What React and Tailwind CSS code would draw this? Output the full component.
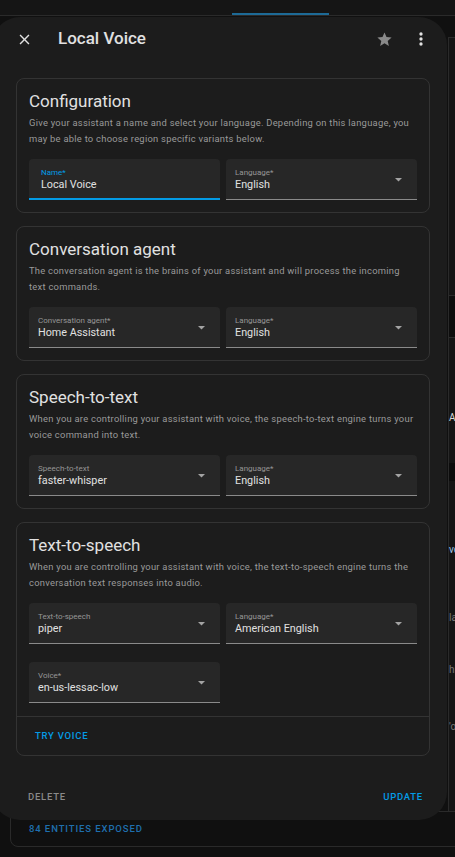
import React from 'react';

function Field({ label, value, focused, select }) {
  return (
    <div
      className={`relative h-[41px] rounded-t-[4px] bg-[#272727] pt-[9px] ${select ? 'pl-[9px]' : 'pl-[12px]'} ${
        focused ? 'border-b-2 border-[#039be5]' : 'border-b border-[#8a8a8a]'
      }`}
    >
      <div className={`text-[8px] leading-[10px] ${focused ? 'text-[#039be5]' : 'text-[#969696]'}`}>{label}</div>
      <div className="text-[10.8px] leading-[14px] text-[#e1e1e1]">{value}</div>
      {select && (
        <svg className="absolute right-[15px] top-[19px]" width="7" height="4" viewBox="0 0 7 4">
          <path d="M0 0h7L3.5 3.5z" fill="#a3a3a3" />
        </svg>
      )}
    </div>
  );
}

function Section({ title, text, children }) {
  return (
    <section className="rounded-[8px] border border-[#333333] px-[12px] pt-[12px] pb-[12px]">
      <h2 className="text-[17px] leading-[20px] text-[#e1e1e1]">{title}</h2>
      <p className="mt-[4px] text-[9.4px] leading-[15.5px] tracking-[0.26px] text-[#9a9a9a]">{text}</p>
      {children}
    </section>
  );
}

export default function App() {
  return (
    <div className="relative flex h-[857px] w-[455px] flex-col overflow-hidden bg-[#101010] font-[Roboto,sans-serif]">
      {/* page behind the dialog */}
      <div className="flex h-[16px] border-b border-[#2a2a2a] bg-[#151515]">
        <div className="ml-[232px] mt-auto h-[2px] w-[97px] bg-[#1d6a96]"></div>
      </div>
      <div className="flex flex-1">
        <div className="w-[448px] shrink-0"></div>
        <div className="mt-[21px] flex-1 border-l border-t border-[#2a2a2a] bg-[#151515] text-[10px] leading-[12px]">
          <div className="h-[258px] border-b border-[#2a2a2a]"></div>
          <div className="h-[42px] border-b border-[#2a2a2a] bg-[#0d0d0d]"></div>
          <div className="h-[74px]"></div>
          <div className="text-[#d8d8d8]">Assist</div>
          <div className="h-[39px]"></div>
          <div className="h-[18px] bg-[#0c0c0c]"></div>
          <div className="h-[63px]"></div>
          <div className="text-[#9fc6e4]">voice</div>
          <div className="h-[56px]"></div>
          <div className="text-[#777]">language</div>
          <div className="h-[40px]"></div>
          <div className="text-[#777]">hi</div>
          <div className="h-[45px]"></div>
          <div className="text-[#777]">'o</div>
        </div>
      </div>
      <div className="mb-[10px] ml-[10px] -mr-[10px] flex h-[36px] items-center rounded-[8px] border border-[#2a2a2a] pl-[18px]">
        <span className="text-[9.5px] font-medium tracking-[0.9px] text-[#1f6fae]">84 ENTITIES EXPOSED</span>
      </div>

      {/* dialog */}
      <div className="absolute left-[-8px] top-[17px] flex h-[803px] w-[455px] flex-col rounded-[28px] bg-[#1c1c1c]">
        <div className="flex h-[44px] items-center pl-[24px] pr-[16px]">
          <svg width="17" height="17" viewBox="0 0 24 24">
            <path
              fill="#e1e1e1"
              d="M19,6.41L17.59,5L12,10.59L6.41,5L5,6.41L10.59,12L5,17.59L6.41,19L12,13.41L17.59,19L19,17.59L13.41,12L19,6.41Z"
            />
          </svg>
          <h1 className="ml-[25px] flex-1 text-[17px] font-medium text-[#e1e1e1]">Local Voice</h1>
          <svg width="17" height="17" viewBox="0 0 24 24">
            <path fill="#8a8a8a" d="M12 17.27L18.18 21l-1.64-7.03L22 9.24l-7.19-.61L12 2 9.19 8.63 2 9.24l5.46 4.73L5.82 21z" />
          </svg>
          <svg className="ml-[18px]" width="20" height="20" viewBox="0 0 24 24">
            <path
              fill="#e1e1e1"
              d="M12,16A2,2 0 0,1 14,18A2,2 0 0,1 12,20A2,2 0 0,1 10,18A2,2 0 0,1 12,16M12,10A2,2 0 0,1 14,12A2,2 0 0,1 12,14A2,2 0 0,1 10,12A2,2 0 0,1 12,10M12,4A2,2 0 0,1 14,6A2,2 0 0,1 12,8A2,2 0 0,1 10,6A2,2 0 0,1 12,4Z"
            />
          </svg>
        </div>

        <div className="flex flex-col gap-[13px] pl-[24px] pr-[17px] pt-[17px]">
          <Section
            title="Configuration"
            text="Give your assistant a name and select your language. Depending on this language, you may be able to choose region specific variants below."
          >
            <div className="mt-[13px] grid grid-cols-2 gap-[6px]">
              <Field label="Name*" value="Local Voice" focused />
              <Field label="Language*" value="English" select />
            </div>
          </Section>

          <Section
            title="Conversation agent"
            text="The conversation agent is the brains of your assistant and will process the incoming text commands."
          >
            <div className="mt-[13px] grid grid-cols-2 gap-[6px]">
              <Field label="Conversation agent*" value="Home Assistant" select />
              <Field label="Language*" value="English" select />
            </div>
          </Section>

          <Section
            title="Speech-to-text"
            text="When you are controlling your assistant with voice, the speech-to-text engine turns your voice command into text."
          >
            <div className="mt-[13px] grid grid-cols-2 gap-[6px]">
              <Field label="Speech-to-text" value="faster-whisper" select />
              <Field label="Language*" value="English" select />
            </div>
          </Section>

          <section className="rounded-[8px] border border-[#333333] px-[12px] pt-[12px]">
            <h2 className="text-[17px] leading-[20px] text-[#e1e1e1]">Text-to-speech</h2>
            <p className="mt-[4px] text-[9.4px] leading-[15.5px] tracking-[0.26px] text-[#9a9a9a]">
              When you are controlling your assistant with voice, the text-to-speech engine turns the conversation text
              responses into audio.
            </p>
            <div className="mt-[13px] grid grid-cols-2 gap-[6px]">
              <Field label="Text-to-speech" value="piper" select />
              <Field label="Language*" value="American English" select />
            </div>
            <div className="mt-[18px] grid grid-cols-2 gap-[6px]">
              <Field label="Voice*" value="en-us-lessac-low" select />
            </div>
            <div className="-mx-[12px] mt-[13px] flex h-[39px] items-center border-t border-[#333333] pl-[18px]">
              <span className="text-[9.5px] font-medium tracking-[0.75px] text-[#039be5]">TRY VOICE</span>
            </div>
          </section>
        </div>

        <div className="mt-auto flex h-[46px] items-center justify-between pl-[36px] pr-[24px]">
          <span className="text-[9.5px] font-medium tracking-[0.75px] text-[#8a8a8a]">DELETE</span>
          <span className="text-[9.5px] font-medium tracking-[0.75px] text-[#039be5]">UPDATE</span>
        </div>
      </div>
    </div>
  );
}
